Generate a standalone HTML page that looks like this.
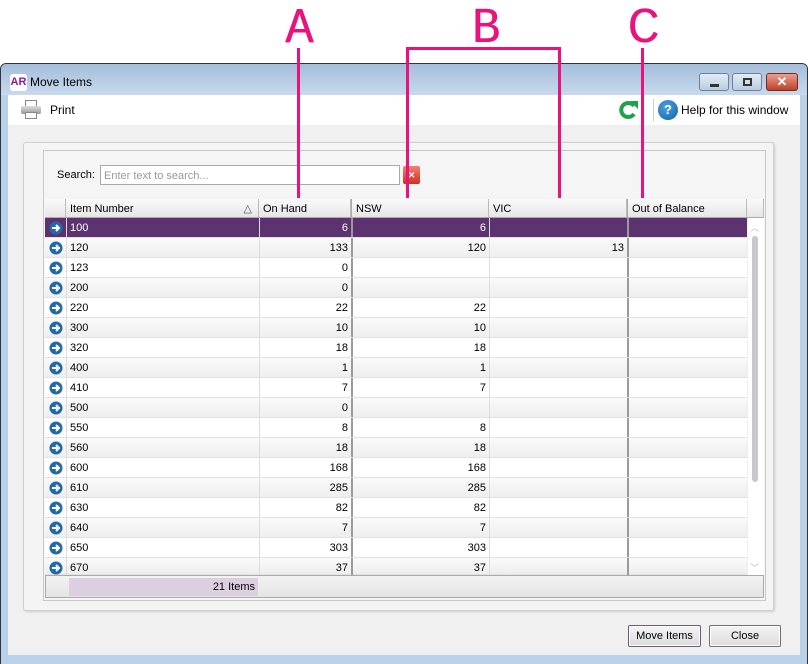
<!DOCTYPE html>
<html><head><meta charset="utf-8"><style>
*{box-sizing:border-box;margin:0;padding:0}
body{width:808px;height:664px;background:#fff;position:relative;overflow:hidden;font-family:"Liberation Sans",sans-serif;font-size:11px;color:#000}
.a{position:absolute}
.pk{background:#e8137d;position:absolute}
.lt{position:absolute;color:#e8137d;font-family:"Liberation Sans",sans-serif;font-size:48px;line-height:48px;transform:scaleX(0.88);transform-origin:left top;text-shadow:1px 0 0 #e8137d}
.row{position:absolute;left:45px;width:702px;height:20px;border-bottom:1px solid #e2e2e2}
.row div{position:absolute;top:0;height:19px;line-height:20px;padding:0 3px}
.c1{left:21px;width:193px;border-left:1px solid #ddd}
.c2{left:214px;width:92px;text-align:right;border-left:1px solid #ddd}
.c3{left:306px;width:138px;text-align:right;border-left:2px solid #9a9a9a}
.c4{left:444px;width:138px;text-align:right;border-left:1px solid #ddd}
.c5{left:582px;width:120px;border-left:2px solid #9a9a9a}
.ic{position:absolute;left:4px;top:3px;width:14px;height:14px}
.hd{position:absolute;top:199px;height:19px;line-height:20px;background:linear-gradient(#fafafa,#e6e6e6);border-right:1px solid #bbb;border-bottom:1px solid #aaa;padding-left:4px}
.btn{position:absolute;top:625px;height:22px;border:1px solid #707070;border-radius:2px;background:linear-gradient(#f4f4f4,#dcdcdc);text-align:center;line-height:20px;font-size:11px;box-shadow:inset 0 0 0 1px #fff}
</style></head><body>
<div class="lt" style="left:285px;top:3px">A</div>
<div class="lt" style="left:472px;top:3px">B</div>
<div class="lt" style="left:628px;top:3px">C</div>
<!-- window -->
<div class="a" style="left:0;top:63px;width:808px;height:601px;background:#b9d1ea;border:1px solid #333;border-bottom:none;border-radius:6px 6px 0 0"></div>
<div class="a" style="left:1px;top:64px;width:806px;height:31px;background:linear-gradient(#a3bedb,#c8d9ec);border-radius:5px 5px 0 0"></div>
<div class="a" style="left:10px;top:74px;width:17px;height:17px;background:#fff;border-radius:3px;color:#8a1a9a;font-weight:bold;font-size:11px;line-height:17px;text-align:center">AR</div>
<div class="a" style="left:30px;top:75px;font-size:12px">Move Items</div>
<div class="a" style="left:699px;top:73px;width:30px;height:18px;border:1px solid #6d7f99;border-radius:3px;background:linear-gradient(#e3ecf6,#b9cce2)"><div class="a" style="left:10px;top:10px;width:9px;height:3px;background:#333"></div></div>
<div class="a" style="left:732px;top:73px;width:30px;height:18px;border:1px solid #6d7f99;border-radius:3px;background:linear-gradient(#e3ecf6,#b9cce2)"><div class="a" style="left:10px;top:4px;width:9px;height:8px;border:2px solid #333"></div></div>
<div class="a" style="left:766px;top:73px;width:32px;height:18px;border:1px solid #7a2a1a;border-radius:3px;background:linear-gradient(#e8a090,#c0402a);color:#fff;font-weight:bold;text-align:center;line-height:16px;font-size:13px">✕</div>
<div class="a" style="left:8px;top:95px;width:792px;height:30px;background:#fff"></div>
<div class="a" style="left:20px;top:100px;width:22px;height:20px"><div class="a" style="left:5px;top:0;width:12px;height:7px;border:1px solid #888;background:#fff"></div><div class="a" style="left:1px;top:6px;width:20px;height:8px;background:linear-gradient(#ddd,#999);border-radius:2px"></div><div class="a" style="left:5px;top:12px;width:12px;height:7px;border:1px solid #888;background:#fff"></div></div>
<div class="a" style="left:50px;top:103px;font-size:12px">Print</div>
<svg class="a" style="left:617px;top:98px" width="24" height="24" viewBox="0 0 24 24"><path d="M17 8 A7 7 0 1 0 17 16" fill="none" stroke="#1fa34a" stroke-width="4"/><path d="M13 3 L21 3 L21 11 Z" fill="#1fa34a"/></svg>
<div class="a" style="left:653px;top:99px;width:1px;height:22px;background:#ccc"></div>
<div class="a" style="left:658px;top:100px;width:20px;height:20px;border-radius:50%;background:radial-gradient(circle at 40% 35%,#4aa0e0,#1460a8);color:#fff;font-weight:bold;text-align:center;line-height:20px;font-size:13px">?</div>
<div class="a" style="left:681px;top:103px;font-size:12px">Help for this window</div>
<div class="a" style="left:8px;top:125px;width:792px;height:530px;background:#f0f0f0"></div>
<div class="a" style="left:23px;top:142px;width:751px;height:469px;background:#f4f4f4;border:1px solid #d0d0d0;border-radius:3px;box-shadow:1px 1px 2px #ccc"></div>
<div class="a" style="left:43px;top:150px;width:723px;height:451px;background:#f5f5f5;border:1px solid #c8c8c8"></div>
<div class="a" style="left:57px;top:169px">Search:</div>
<div class="a" style="left:100px;top:165px;width:300px;height:20px;background:#fff;border:1px solid #aaa;color:#999;padding:4px 3px;line-height:12px">Enter text to search...</div>
<div class="a" style="left:403px;top:166px;width:17px;height:18px;background:linear-gradient(#f08070,#d03020);border-radius:2px;color:#fff;font-size:9px;text-align:center;line-height:18px;font-weight:bold">✕</div>
<!-- grid -->
<div class="a" style="left:45px;top:199px;width:719px;height:376px;background:#fff"></div>
<div class="hd" style="left:45px;width:21px"></div>
<div class="hd" style="left:66px;width:193px">Item Number<span style="position:absolute;right:6px;color:#555">△</span></div>
<div class="hd" style="left:259px;width:92px">On Hand</div>
<div class="hd" style="left:351px;width:138px;border-left:1px solid #aaa">NSW</div>
<div class="hd" style="left:489px;width:138px">VIC</div>
<div class="hd" style="left:627px;width:120px;border-left:1px solid #aaa">Out of Balance</div>
<div class="hd" style="left:747px;width:17px"></div>
<div id="rows"></div>
<div class="a" style="left:747px;top:218px;width:17px;height:357px;background:#fff;border-left:1px solid #eee"></div>
<div class="a" style="left:752px;top:236px;width:6px;height:246px;background:#c8c9cc;border-radius:3px"></div>
<div class="a" style="left:750px;top:221px;color:#bbb;font-size:9px">︿</div>
<div class="a" style="left:750px;top:561px;color:#bbb;font-size:9px">﹀</div>
<div class="a" style="left:45px;top:575px;width:719px;height:23px;background:linear-gradient(#f2f2f2,#e4e4e4);border:1px solid #aaa"></div>
<div class="a" style="left:69px;top:578px;width:189px;height:18px;background:#dcd0e0;text-align:right;line-height:18px;padding-right:3px">21 Items</div>
<div class="btn" style="left:628px;width:73px;border-color:#6b5a80">Move Items</div>
<div class="btn" style="left:709px;width:72px">Close</div>
<!-- pink lines -->
<div class="pk" style="left:297px;top:48px;width:3px;height:150px"></div>
<div class="pk" style="left:406px;top:47px;width:155px;height:3px"></div>
<div class="pk" style="left:406px;top:47px;width:3px;height:151px"></div>
<div class="pk" style="left:558px;top:47px;width:3px;height:151px"></div>
<div class="pk" style="left:641px;top:48px;width:3px;height:150px"></div>
<script>
var d=[["100","6","6",""],["120","133","120","13"],["123","0","",""],["200","0","",""],["220","22","22",""],["300","10","10",""],["320","18","18",""],["400","1","1",""],["410","7","7",""],["500","0","",""],["550","8","8",""],["560","18","18",""],["600","168","168",""],["610","285","285",""],["630","82","82",""],["640","7","7",""],["650","303","303",""],["670","37","37",""]];
var ic='<svg class="ic" viewBox="0 0 14 14"><circle cx="7" cy="7" r="6.5" fill="#2468a8"/><path d="M3 7 H10 M7 4 L10 7 L7 10" fill="none" stroke="#fff" stroke-width="2"/></svg>';
var h="";d.forEach(function(r,i){var top=218+i*20;var hh=i==17?17:20;var bg=i==0?"background:#5c3270;color:#fff;":(i%2?"background:linear-gradient(#fafafa,#eeeeee);":"background:#fff;");
h+='<div class="row" style="top:'+top+'px;height:'+hh+'px;'+bg+'">'+ic+'<div class="c1">'+r[0]+'</div><div class="c2">'+r[1]+'</div><div class="c3">'+r[2]+'</div><div class="c4">'+r[3]+'</div><div class="c5"></div></div>';});
document.getElementById("rows").innerHTML=h;
</script>
</body></html>
